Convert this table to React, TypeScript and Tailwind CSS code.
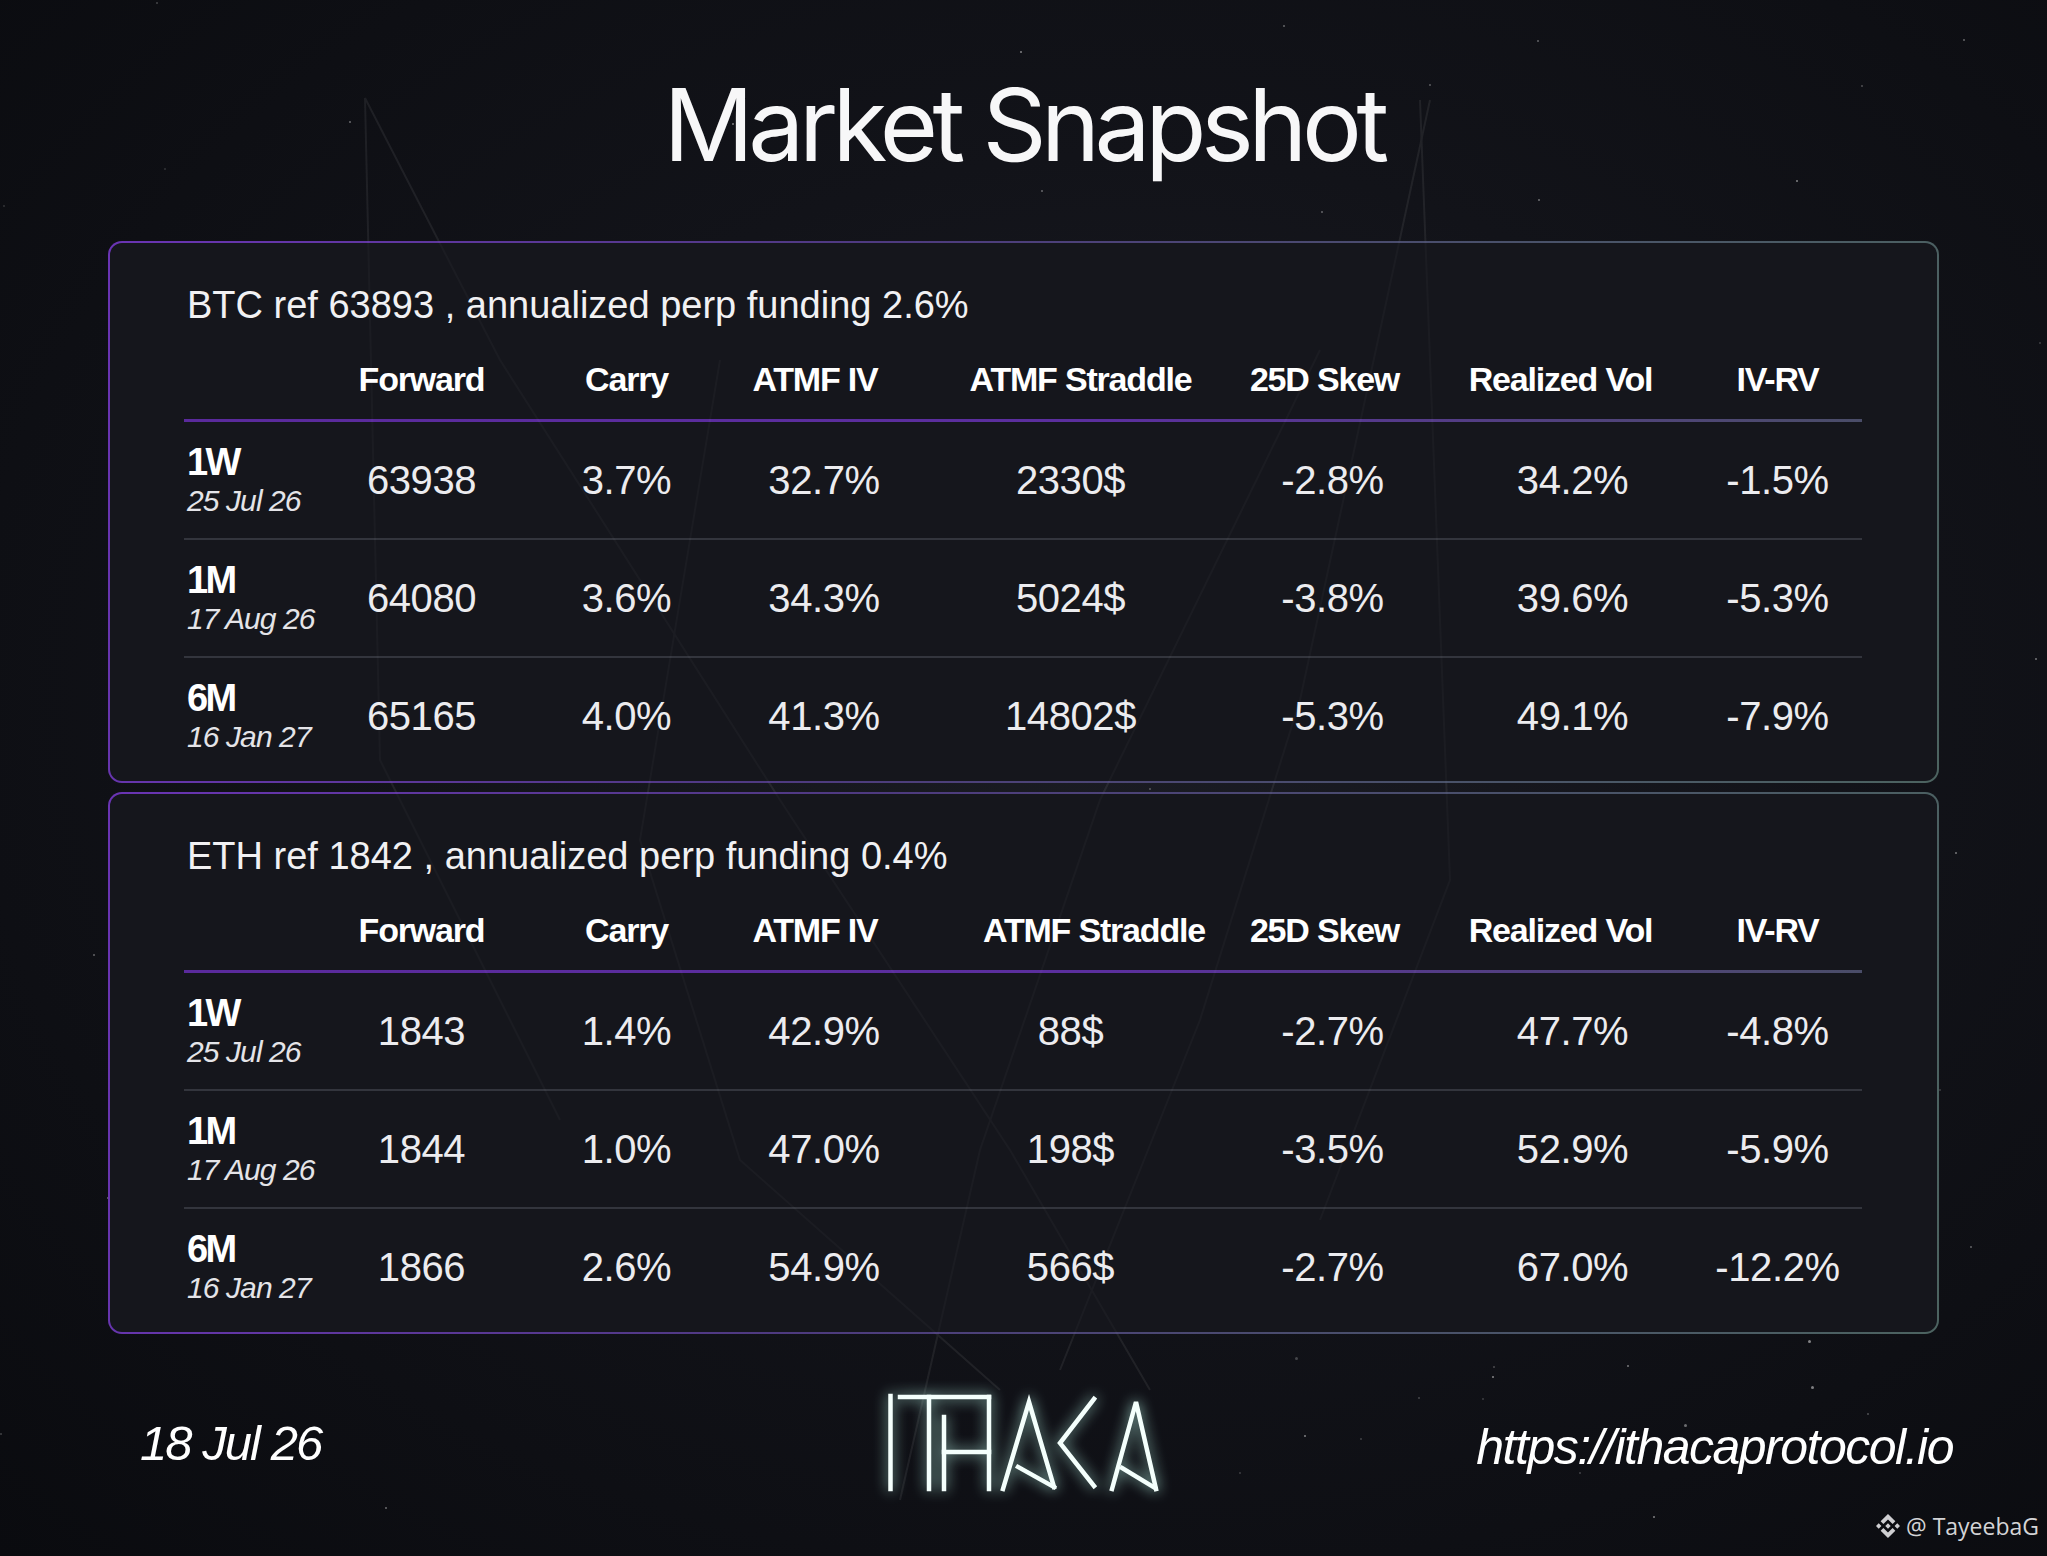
import { SiBinance } from "react-icons/si"

type Row = {
    tenor: string
    expiry: string
    values: string[]
}

type Market = {
    title: string
    straddleShift: string
    rows: Row[]
}

const markets: Market[] = [
    {
        title: "BTC ref 63893 , annualized perp funding 2.6%",
        straddleShift: "pl-[20px]",
        rows: [
            { tenor: "1W", expiry: "25 Jul 26", values: ["63938", "3.7%", "32.7%", "2330$", "-2.8%", "34.2%", "-1.5%"] },
            { tenor: "1M", expiry: "17 Aug 26", values: ["64080", "3.6%", "34.3%", "5024$", "-3.8%", "39.6%", "-5.3%"] },
            { tenor: "6M", expiry: "16 Jan 27", values: ["65165", "4.0%", "41.3%", "14802$", "-5.3%", "49.1%", "-7.9%"] },
        ],
    },
    {
        title: "ETH ref 1842 , annualized perp funding 0.4%",
        straddleShift: "pl-[47px]",
        rows: [
            { tenor: "1W", expiry: "25 Jul 26", values: ["1843", "1.4%", "42.9%", "88$", "-2.7%", "47.7%", "-4.8%"] },
            { tenor: "1M", expiry: "17 Aug 26", values: ["1844", "1.0%", "47.0%", "198$", "-3.5%", "52.9%", "-5.9%"] },
            { tenor: "6M", expiry: "16 Jan 27", values: ["1866", "2.6%", "54.9%", "566$", "-2.7%", "67.0%", "-12.2%"] },
        ],
    },
]

// label | Forward | Carry | ATMF IV | ATMF Straddle | 25D Skew | Realized Vol | IV-RV
const gridCols = "grid grid-cols-[136px_203px_207px_188px_305px_219px_261px_149px]"

// small star field, seeded so it stays the same between renders
function makeStars(count: number) {
    let seed = 7
    const rand = () => {
        seed = (seed * 16807) % 2147483647
        return seed / 2147483647
    }
    return Array.from({ length: count }, () => ({
        left: rand() * 2047,
        top: rand() * 1556,
        size: rand() > 0.85 ? 3 : 2,
        opacity: 0.15 + rand() * 0.35,
    }))
}

const stars = makeStars(90)

function IthakaLogo() {
    return (
        <svg
            width="330"
            height="140"
            viewBox="0 0 330 140"
            fill="none"
            stroke="#f4fffc"
            strokeWidth="4.5"
            strokeLinecap="square"
            strokeLinejoin="miter"
            className="drop-shadow-[0_0_7px_rgba(190,255,240,0.8)]"
        >
            {/* I */}
            <line x1="31.5" y1="26" x2="31.5" y2="119" />
            {/* T */}
            <line x1="41" y1="27" x2="130" y2="27" />
            <line x1="70" y1="27" x2="70" y2="119" />
            {/* H */}
            <line x1="85" y1="47" x2="85" y2="119" />
            <line x1="130" y1="27" x2="130" y2="119" />
            <line x1="85" y1="82" x2="130" y2="82" />
            {/* A */}
            <polyline points="144,119 170,32 195,117" />
            <line x1="159" y1="97" x2="195" y2="117" />
            {/* K */}
            <polyline points="235,29 201,73 235,116" />
            {/* A */}
            <polyline points="253,119 277,32 297,119" />
            <line x1="263" y1="98" x2="296" y2="118" />
        </svg>
    )
}

// faint emblem lines behind (and through) the cards
function BackdropEmblem({ className }: { className: string }) {
    return (
        <svg
            width="2047"
            height="1556"
            viewBox="0 0 2047 1556"
            fill="none"
            stroke="#ffffff"
            strokeWidth="2"
            className={`absolute inset-0 pointer-events-none ${className}`}
        >
            <polyline points="365,98 500,360 780,800 1010,1150 1150,1390" />
            <polyline points="1320,350 1100,800 980,1150 900,1500" />
            <polyline points="720,360 640,840 740,1160 1000,1390" />
            <polyline points="1430,100 1300,700 1200,1020 1060,1370" />
            <polyline points="365,98 380,760 560,1120" />
            <polyline points="1420,100 1450,880 1320,1220" />
        </svg>
    )
}

function MarketCard({ market }: { market: Market }) {
    const headers = [
        { label: "Forward", shift: "" },
        { label: "Carry", shift: "" },
        { label: "ATMF IV", shift: "pr-[18px]" },
        { label: "ATMF Straddle", shift: market.straddleShift },
        { label: "25D Skew", shift: "pr-[16px]" },
        { label: "Realized Vol", shift: "pr-[24px]" },
        { label: "IV-RV", shift: "" },
    ]

    return (
        <div className="rounded-[14px] p-[2px] bg-[linear-gradient(100deg,#6a34b4_0%,#4e3a80_40%,#49506a_72%,#4c6360_100%)]">
            <div className="h-[538px] rounded-[12px] bg-[#15161c] pt-[38px] pl-[74px] pr-[75px]">
                {/* Title line */}
                <div className="h-[48px] flex items-center pl-[3px] text-[38px] leading-none text-[#f1f1f3]">
                    {market.title}
                </div>

                {/* Header */}
                <div className={`${gridCols} h-[80px] mt-[10px] items-center`}>
                    <div />
                    {headers.map((h) => (
                        <div key={h.label} className={`flex justify-center ${h.shift}`}>
                            <span className="whitespace-nowrap text-[34px] font-bold tracking-[-0.035em] text-white">
                                {h.label}
                            </span>
                        </div>
                    ))}
                </div>
                <div className="h-[3px] w-full bg-[linear-gradient(90deg,#5a2a9c_0%,#5b2f9e_55%,#4a4d68_100%)]" />

                {/* Rows */}
                {market.rows.map((row, i) => (
                    <div key={row.tenor}>
                        {i > 0 && <div className="h-[2px] w-full bg-[#33353d]" />}
                        <div className={`${gridCols} h-[116px] items-center`}>
                            <div className="flex flex-col pl-[3px]">
                                <span className="text-[38px] leading-[36px] font-bold tracking-[-0.07em] text-white">
                                    {row.tenor}
                                </span>
                                <span className="mt-[6px] whitespace-nowrap text-[30px] leading-[30px] italic tracking-[-0.03em] text-[#e4e4e8]">
                                    {row.expiry}
                                </span>
                            </div>
                            {row.values.map((v, j) => (
                                <div key={j} className="flex justify-center">
                                    <span className="whitespace-nowrap text-[40px] tracking-[-0.01em] text-[#ececef]">
                                        {v}
                                    </span>
                                </div>
                            ))}
                        </div>
                    </div>
                ))}
            </div>
        </div>
    )
}

export default function App() {
    return (
        <div className="relative w-[2047px] h-[1556px] overflow-hidden bg-[#0c0d12] bg-[radial-gradient(ellipse_at_55%_45%,#1b1c24_0%,#121319_45%,#0a0b0f_100%)] font-['Liberation_Sans',Arial,sans-serif]">
            <BackdropEmblem className="opacity-[0.04]" />
            {stars.map((s, i) => (
                <div
                    key={i}
                    className="absolute rounded-full bg-white"
                    style={{ left: s.left, top: s.top, width: s.size, height: s.size, opacity: s.opacity }}
                />
            ))}

            <div className="relative flex flex-col">
                {/* Title */}
                <h1 className="mt-[75px] h-[100px] text-center text-[100px] leading-none font-normal tracking-[-0.055em] text-[#f7f7f8] font-['Inter',sans-serif]">
                    Market Snapshot
                </h1>

                {/* Cards */}
                <div className="mt-[66px] px-[108px] flex flex-col gap-[9px]">
                    {markets.map((m) => (
                        <MarketCard key={m.title} market={m} />
                    ))}
                </div>

                {/* Footer */}
                <div className="mt-[36px] h-[140px] px-[94px] grid grid-cols-[1fr_auto_1fr] items-center">
                    <div className="pl-[46px] pt-[8px] text-[49px] italic tracking-[-0.04em] text-white">
                        18 Jul 26
                    </div>
                    <IthakaLogo />
                    <div className="flex justify-end pt-[14px] text-[50px] italic tracking-[-0.03em] text-white">
                        https://ithacaprotocol.io
                    </div>
                </div>
            </div>

            <BackdropEmblem className="opacity-[0.025]" />

            {/* Watermark */}
            <div className="absolute right-[8px] bottom-[13px] flex items-center gap-[6px] text-[23px] text-[#d4d4d6] font-['Open_Sans',sans-serif]">
                <SiBinance className="size-[24px] text-[#cfcfd2]" />
                <span>@ TayeebaG</span>
            </div>
        </div>
    )
}
